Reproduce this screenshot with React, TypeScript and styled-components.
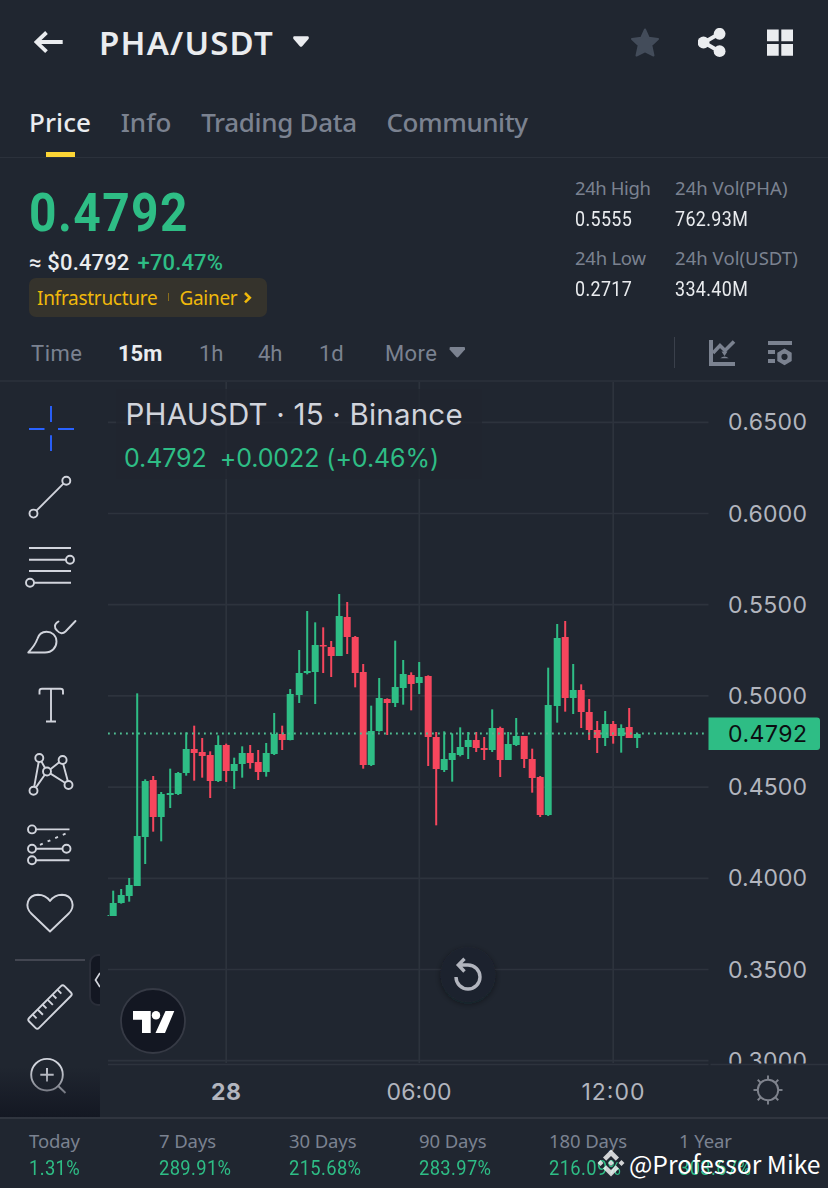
import React from "react";
import styled, { createGlobalStyle } from "styled-components";

const c = {
  bg: "#202630",
  line: "#2b313b",
  text: "#eaecef",
  muted: "#7b8290",
  green: "#2ebd85",
  red: "#f6465d",
  yellow: "#f0b90b",
  tool: "#d1d4dc",
  axis: "#b2b5be",
};

const PLEX = `"Noto Sans", "Open Sans", sans-serif`;
const DIN = `Roboto, "Liberation Sans", sans-serif`;
const UI = `Inter, Roboto, sans-serif`;

const GlobalStyle = createGlobalStyle`
  * { box-sizing: border-box; }
  body { margin: 0; background: ${c.bg}; }
  svg { display: block; flex: none; }
`;

const Page = styled.div`
  width: 828px;
  height: 1188px;
  display: flex;
  flex-direction: column;
  background: ${c.bg};
  color: ${c.text};
  font-family: ${PLEX};
  overflow: hidden;
  position: relative;
  white-space: nowrap;
`;

const Header = styled.header`
  height: 87px;
  display: flex;
  align-items: center;
  padding: 0 34px 2px;
`;

const Pair = styled.h1`
  margin: 0 18px 0 36px;
  width: 175px;
  font-size: 33px;
  font-weight: 600;
  letter-spacing: 1.2px;
  line-height: 40px;
`;

const HeaderActions = styled.div`
  display: flex;
  align-items: center;
  gap: 38px;
  margin-left: auto;
`;

const Tabs = styled.nav`
  height: 71px;
  display: flex;
  padding: 0 29px;
  border-bottom: 1px solid ${c.line};
`;

const Tab = styled.div<{ $active?: boolean; $w: number; $ls: number }>`
  width: ${(p) => p.$w}px;
  margin-right: 30px;
  display: flex;
  flex-direction: column;
  align-items: center;
  justify-content: space-between;
  padding-top: 17px;
  font-size: 26px;
  font-weight: 500;
  line-height: 36px;
  letter-spacing: ${(p) => p.$ls}px;
  color: ${(p) => (p.$active ? c.text : c.muted)};
  &::after {
    content: "";
    width: 29px;
    height: 5px;
    background: ${(p) => (p.$active ? "#fcd535" : "transparent")};
  }
`;

const Summary = styled.section`
  height: 167px;
  display: flex;
  justify-content: space-between;
  padding: 0 28px 0 29px;
`;

const PriceColumn = styled.div`
  padding-top: 20px;
`;

const LastPrice = styled.div`
  width: 180px;
  height: 68px;
  font: 700 54.5px/68px ${DIN};
  letter-spacing: 1.6px;
  color: ${c.green};
  transform: scaleX(0.88);
  transform-origin: 0 50%;
`;

const SubPrice = styled.div`
  height: 32px;
  display: flex;
  gap: 8px;
  font: 500 22px/34px ${DIN};
  letter-spacing: 0.15px;
`;

const Change = styled.span`
  color: ${c.green};
`;

const TagPill = styled.div`
  width: 238px;
  height: 39px;
  display: flex;
  align-items: center;
  padding: 0 8px;
  border-radius: 7px;
  background: #35332c;
  color: ${c.yellow};
  font-size: 19px;
  letter-spacing: -0.28px;
`;

const TagDivider = styled.i`
  width: 1px;
  height: 8px;
  margin: 0 10px 2px 11px;
  background: #8a6e1c;
`;

const StatGrid = styled.div`
  display: grid;
  grid-template-columns: 100px 125px;
  grid-auto-rows: 69.5px;
  padding-top: 15px;
`;

const StatLabel = styled.div<{ $ls: number }>`
  font-size: 18.5px;
  line-height: 30px;
  letter-spacing: ${(p) => p.$ls}px;
  color: ${c.muted};
`;

const StatValue = styled.div`
  font: 400 20px/33px ${DIN};
  letter-spacing: 0.4px;
  transform: scaleX(0.895);
  transform-origin: 0 50%;
`;

const Intervals = styled.div`
  height: 57px;
  display: flex;
  align-items: center;
  padding: 0 35px 0 31px;
  border-bottom: 2px solid #282e38;
`;

const Interval = styled.span<{ $w: number; $active?: boolean; $ls?: number }>`
  width: ${(p) => p.$w}px;
  padding-top: 2px;
  font: ${(p) => (p.$active ? 700 : 400)} 22px/30px ${DIN};
  letter-spacing: ${(p) => p.$ls ?? 0}px;
  color: ${(p) => (p.$active ? c.text : c.muted)};
`;

const IntervalTools = styled.div`
  margin-left: auto;
  display: flex;
  align-items: center;
  gap: 32px;
  height: 31px;
  padding-left: 33px;
  border-left: 1px solid #3a404b;
`;

const ChartArea = styled.section`
  height: 737px;
  display: flex;
  border-bottom: 2px solid #30353f;
`;

const Toolbar = styled.aside`
  width: 100px;
  height: 735px;
  padding-top: 12px;
  position: relative;
  overflow: hidden;
`;

const ToolCell = styled.div`
  height: 69.2px;
  display: flex;
  align-items: center;
`;

const ToolDivider = styled.hr`
  width: 70px;
  height: 2px;
  margin: 11px 15px 12px;
  border: 0;
  background: #434651;
`;

const ToolbarFade = styled.div`
  position: absolute;
  left: 0;
  right: 0;
  bottom: 0;
  height: 50px;
  background: linear-gradient(rgba(19, 23, 34, 0), rgba(19, 23, 34, 0.95));
`;

const CollapseHandle = styled.div`
  position: absolute;
  left: 89px;
  top: 572px;
  width: 24px;
  height: 52px;
  padding: 16px 0 0 3px;
  border: 2px solid #2a2e39;
  border-radius: 9px;
  background: #131722;
`;

const Plot = styled.div`
  width: 728px;
  height: 735px;
  display: flex;
  position: relative;
`;

const Legend = styled.div`
  position: absolute;
  left: 16px;
  top: 7px;
  width: 366px;
  height: 90px;
  padding-left: 8px;
  background: rgba(32, 38, 48, 0.8);
  font-family: ${UI};
`;

const LegendTitle = styled.div`
  padding-left: 1.5px;
  font-size: 29.5px;
  line-height: 51px;
  letter-spacing: 0.2px;
  color: ${c.tool};
`;

const LegendValues = styled.div`
  display: flex;
  gap: 13px;
  padding-top: 1px;
  font-size: 25px;
  line-height: 34px;
  letter-spacing: -0.08px;
  color: ${c.green};
`;

const Returns = styled.footer`
  height: 69px;
  display: grid;
  grid-template-columns: repeat(6, 130px);
  padding: 7px 0 0 29px;
`;

const ReturnLabel = styled.div`
  font: 400 18.5px/30px ${PLEX};
  letter-spacing: -0.1px;
  color: ${c.muted};
`;

const ReturnValue = styled.div`
  font: 400 19.5px/25px ${DIN};
  letter-spacing: 0.4px;
  color: ${c.green};
  transform: scaleX(0.94);
  transform-origin: 0 50%;
`;

const Watermark = styled.div`
  position: absolute;
  left: 597px;
  top: 1145px;
  display: flex;
  align-items: center;
  gap: 4px;
  font: 400 24.7px/36px "Noto Sans CJK SC", sans-serif;
  color: #fff;
`;

const toolIcons: Record<string, React.ReactNode> = {
  cross: <path stroke="#2962ff" d="M51-23V-7M51 6.3V22M29 0H44.5M58 0H74" />,
  trend: (
    <>
      <circle cx="66.3" cy="-17.3" r="4" />
      <circle cx="33.5" cy="15.6" r="4" />
      <path d="M63.4-14.4 36.4 12.7" />
    </>
  ),
  fib: (
    <>
      <path d="M29-19H71M29-7.3H66M29 4H71M34 15.7H71" />
      <circle cx="70" cy="-7.3" r="4" />
      <circle cx="30" cy="15.7" r="4" />
    </>
  ),
  brush: (
    <path
      strokeLinecap="round"
      strokeLinejoin="round"
      d="M28.300 16.500H45C52 16.500 56.500 11.500 56.500 5.500C56.500-.5 52-4.300 46.500-4.300C41.500-4.300 38.500-1 37.300 3C36 7 31.500 13 28.300 16.500ZM58.500-14.500C54-12 54-8.500 57-5.500C60-2 63-2 65.500-4.500L75.500-15"
    />
  ),
  text: <path d="M39.500-10.500V-14Q39.500-16.300 42-16.300H60.500Q63-16.300 63-14V-10.500M51-16.300V16.500M46 16.500H56" />,
  pattern: (
    <>
      <circle cx="39.300" cy="-17" r="4" />
      <circle cx="62.600" cy="-15" r="4" />
      <circle cx="47" cy="-3.500" r="4" />
      <circle cx="33.500" cy="15.700" r="4" />
      <circle cx="68.500" cy="10" r="4" />
      <path d="M38.700-13 34.200 11.700M41.400-13.600 45-7M44.800-.2 36 12.400M50.400-5.800 59.200-12.700M50.500-1.400 65 7.700M63.200-11 67.800 6" />
    </>
  ),
  position: (
    <>
      <circle cx="32" cy="-14.600" r="4" />
      <circle cx="32" cy="4.700" r="4" />
      <circle cx="66.500" cy="4.700" r="4" />
      <circle cx="32" cy="16.300" r="4" />
      <path d="M36-14.600H69.500M36 4.700H62.500M36 16.300H69.500" />
      <path strokeDasharray="3 5.300" d="M40 .8 67-11" />
    </>
  ),
  heart: (
    <path
      strokeLinejoin="round"
      d="M50 18.500 31.500 .8C24-6.500 27.500-18 38-18.300C44-18.300 47.500-15.500 50-12C52.500-15.500 56-18.300 62-18.300C72.500-18 76-6.500 68.500 .8Z"
    />
  ),
  ruler: (
    <g transform="translate(50 0) rotate(-45)">
      <rect x="-25" y="-7" width="50" height="14" rx="2.500" />
      <path d="M-17.500-7V-1.500M-10.500-7V.5M-3.500-7V-1.500M3.500-7V.5M10.500-7V-1.500M17.500-7V-1.500" />
    </g>
  ),
  zoom: (
    <>
      <circle cx="47" cy="-1.300" r="15.800" />
      <path d="M40.300-1.300H53.700M47-8V5.400M58.500 10.200 65.500 17" />
    </>
  ),
};

function Tool({ name }: { name: string }) {
  return (
    <ToolCell>
      <svg width="100" height="60" viewBox="0 -30 100 60" fill="none" stroke={c.tool} strokeWidth="1.900">
        {toolIcons[name]}
      </svg>
    </ToolCell>
  );
}

// [high, body top, body bottom, low, rising], in thirds of a pixel below each segment's base
type Candle = [number, number, number, number, 0 | 1];
const segments: { base: number; candles: Candle[] }[] = [
  {
    base: 279,
    candles: [
      [692, 729, 767, 767, 1], [687, 705, 729, 731, 1], [654, 675, 709, 725, 1], [100, 528, 677, 677, 1],
      [358, 363, 530, 612, 1], [348, 360, 471, 515, 0], [396, 403, 471, 544, 1], [326, 400, 406, 444, 1],
      [336, 338, 403, 405, 1], [217, 267, 339, 347, 1], [197, 267, 279, 362, 0], [234, 276, 288, 353, 0],
      [274, 286, 363, 414, 0], [226, 255, 363, 366, 1], [251, 255, 333, 366, 0], [293, 311, 332, 387, 1],
      [259, 278, 311, 353, 1], [255, 278, 309, 326, 0], [270, 306, 335, 360, 0], [249, 279, 335, 350, 1],
      [159, 221, 282, 285, 1], [197, 221, 240, 270, 0], [87, 102, 241, 241, 1],
    ],
  },
  {
    base: 199,
    candles: [
      [210, 279, 345, 369, 1], [93, 273, 280, 283, 1], [127, 194, 276, 372, 1], [142, 195, 199, 279, 0],
      [183, 200, 227, 291, 0], [42, 109, 227, 228, 1], [66, 111, 172, 222, 0], [168, 171, 279, 322, 0],
      [252, 276, 554, 566, 0], [377, 454, 554, 558, 1], [294, 354, 453, 455, 1], [355, 357, 369, 465, 0],
      [182, 321, 369, 381, 1], [240, 282, 323, 374, 1], [277, 285, 312, 391, 0], [246, 291, 309, 342, 1],
      [286, 289, 471, 558, 0], [456, 470, 568, 736, 0], [454, 537, 570, 576, 1],
    ],
  },
  {
    base: 219,
    candles: [
      [400, 460, 480, 545, 1], [382, 441, 465, 469, 1], [396, 420, 441, 477, 1], [396, 420, 444, 456, 0],
      [411, 443, 449, 480, 0], [328, 383, 450, 456, 1], [380, 383, 479, 531, 0], [396, 432, 479, 480, 1],
      [354, 408, 435, 438, 1], [408, 408, 476, 504, 0], [446, 476, 534, 578, 0], [528, 531, 645, 651, 0],
      [203, 316, 645, 648, 1], [72, 114, 318, 368, 1], [63, 111, 294, 335, 0], [192, 271, 294, 342, 1],
      [253, 270, 336, 384, 0], [297, 335, 390, 420, 0], [363, 390, 414, 459, 0], [333, 373, 414, 438, 1],
      [363, 373, 408, 431, 0], [373, 383, 408, 458, 1], [324, 381, 413, 413, 0], [399, 402, 414, 444, 1],
    ],
  },
];
const candles = segments.flatMap((s) =>
  s.candles.map(([h, t, b, l, up]) => ({ h: s.base + h / 3, t: s.base + t / 3, b: s.base + b / 3, l: s.base + l / 3, up })),
);

const prices = ["0.6500", "0.6000", "0.5500", "0.5000", "0.4500", "0.4000", "0.3500", "0.3000"];

function Chart() {
  return (
    <svg width="728" height="735" viewBox="0 1 728 735" fontFamily={UI} fontSize="23">
      <defs>
        <clipPath id="priceAxis">
          <rect x="600" width="128" height="682.500" />
        </clipPath>
        <filter id="soft" x="-50%" y="-50%" width="200%" height="200%">
          <feDropShadow dx="0" dy="2" stdDeviation="3" floodColor="#10141c" floodOpacity=".45" />
        </filter>
      </defs>
      <g stroke="#2d333d" strokeWidth="1.700">
        {prices.map((p, i) => (
          <path key={p} d={`M8 ${41.300 + i * 91.200}H608.500`} />
        ))}
        {[126.200, 319.300, 513.200].map((x) => (
          <path key={x} d={`M${x} 0V682`} />
        ))}
        <path d="M8 683.500H608.500M610.500 683.500H728" />
      </g>
      <g fill={c.axis} clipPath="url(#priceAxis)">
        {prices.map((p, i) => (
          <text key={p} x="628" y={49.300 + i * 91.200} textLength="79">
            {p}
          </text>
        ))}
      </g>
      <path d="M7.500 534.500h1.500" stroke={c.green} strokeWidth="1" />
      {candles.map((k, i) => {
        const x = Math.round(13.100 + i * 8.0625);
        const top = Math.round(k.t);
        return (
          <g key={i} fill={k.up ? c.green : c.red}>
            <rect x={x - 0.800} y={k.h} width="2" height={k.l - k.h} />
            <rect x={x - 3.300} y={top} width="7" height={Math.max(1.500, Math.round(k.b) - top)} />
          </g>
        );
      })}
      <path d="M8 352.500H605" stroke="#4fbd92" strokeWidth="1.800" strokeDasharray="1.800 4.200" />
      <path d="M608.500 336.500H717Q720 336.500 720 339.500V366Q720 369 717 369H608.500Z" fill={c.green} />
      <text x="628" y="361" fill="#0b0e11" textLength="79">
        0.4792
      </text>
      <g fill={c.axis}>
        <text x="111" y="719" fontWeight="700" textLength="30">
          28
        </text>
        <text x="286.500" y="719" textLength="65">
          06:00
        </text>
        <text x="481.500" y="719" textLength="63">
          12:00
        </text>
      </g>
      <circle cx="53" cy="640" r="32" fill="#131722" stroke="#363a45" strokeWidth="1.800" />
      <g fill="#fff">
        <path d="M33 630H50.700V652H42V638.700H33ZM65.500 630H74.300L65 652H55.500Z" />
        <circle cx="56" cy="634.300" r="4.200" />
      </g>
      <circle cx="368" cy="593.500" r="27.500" fill="#1f242f" filter="url(#soft)" />
      <path
        d="M356 596A12 12 0 1 0 368 584H359.500M364.500 577.800 358.300 584 364.500 590.500"
        fill="none"
        stroke={c.axis}
        strokeWidth="3.400"
      />
      <g fill="none" stroke="#7f838d" strokeWidth="1.900">
        <circle cx="668" cy="709" r="10.200" />
        {[0, 45, 90, 135, 180, 225, 270, 315].map((a) => (
          <path key={a} transform={`rotate(${a} 668 709)`} d="M668 698.500V694.500" />
        ))}
      </g>
    </svg>
  );
}

const stats: [string, string, number][] = [
  ["24h High", "0.5555", -0.4],
  ["24h Vol(PHA)", "762.93M", 0.05],
  ["24h Low", "0.2717", -0.25],
  ["24h Vol(USDT)", "334.40M", 0.05],
];

const returns = [
  ["Today", "1.31%"],
  ["7 Days", "289.91%"],
  ["30 Days", "215.68%"],
  ["90 Days", "283.97%"],
  ["180 Days", "216.09%"],
  ["1 Year", "303.67%"],
];

export default function App() {
  return (
    <Page>
      <GlobalStyle />
      <Header>
        <svg width="29" height="24" viewBox="0 0 29 24" fill="none" stroke={c.text} strokeWidth="3.800">
          <path d="M12.500 1.500 2.500 11 12.500 20.700M3 11H28.700" />
        </svg>
        <Pair>PHA/USDT</Pair>
        <svg width="17" height="16" viewBox="-0.7 0.8 17 16" fill={c.text}>
          <path d="M1.500 2H15Q16 2 16 3V4.500L9.500 12Q8.300 13.200 7.100 12L.6 4.500V3Q.6 2 1.500 2Z" />
        </svg>
        <HeaderActions>
          <svg width="30" height="30" viewBox="0 0 30 30" fill="#434c5a" stroke="#434c5a" strokeWidth="2" strokeLinejoin="round">
            <path d="M15 1.500 18.800 9.800 28 11 21.300 17.300 23.500 27.500 15 23.300 6.500 27.500 8.700 17.300 2 11 11.200 9.800Z" />
          </svg>
          <svg width="30" height="30" viewBox="1 0 30 30" fill={c.text} stroke={c.text}>
            <path d="M7 14.500 22.500 5.500M7 14.500 22.500 23.500" strokeWidth="3.800" />
            <g stroke="none">
              <circle cx="6.500" cy="14.500" r="5.900" />
              <circle cx="22.600" cy="5.800" r="5.900" />
              <circle cx="22.600" cy="23.200" r="5.900" />
            </g>
          </svg>
          <svg width="28" height="28" viewBox="0 0 28 28" fill={c.text}>
            <path d="M1 .5H12.700V12.200H1ZM15.300 .5H27V12.200H15.300ZM1 15H12.700V26.700H1ZM15.300 15H27V26.700H15.300Z" />
          </svg>
        </HeaderActions>
      </Header>
      <Tabs>
        <Tab $active $w={62} $ls={0.1}>Price</Tab>
        <Tab $w={50} $ls={0}>Info</Tab>
        <Tab $w={156} $ls={-0.33}>Trading Data</Tab>
        <Tab $w={140} $ls={-0.45}>Community</Tab>
      </Tabs>
      <Summary>
        <PriceColumn>
          <LastPrice>0.4792</LastPrice>
          <SubPrice>
            <span>≈ $0.4792</span>
            <Change>+70.47%</Change>
          </SubPrice>
          <TagPill>
            Infrastructure
            <TagDivider />
            Gainer
            <svg width="10" height="14" viewBox="0 0 10 14" fill="none" stroke={c.yellow} strokeWidth="2.600" style={{ marginLeft: 6 }}>
              <path d="M2 2 6.800 6.700 2 11.400" />
            </svg>
          </TagPill>
        </PriceColumn>
        <StatGrid>
          {stats.map(([k, v, ls]) => (
            <div key={k}>
              <StatLabel $ls={ls}>{k}</StatLabel>
              <StatValue>{v}</StatValue>
            </div>
          ))}
        </StatGrid>
      </Summary>
      <Intervals>
        <Interval $w={87} $ls={0.500}>Time</Interval>
        <Interval $w={81} $active>15m</Interval>
        <Interval $w={59}>1h</Interval>
        <Interval $w={61}>4h</Interval>
        <Interval $w={66}>1d</Interval>
        <Interval $w={64} $ls={0.400}>More</Interval>
        <svg width="17" height="14" viewBox="0 0 17 14" fill={c.muted}>
          <path d="M1.500 1H15Q16 1 16 2V3.500L9.500 10.800Q8.300 12 7.100 10.800L.6 3.500V2Q.6 1 1.500 1Z" />
        </svg>
        <IntervalTools>
          <svg width="28" height="28" viewBox="0 0 28 28" fill="none" stroke={c.muted} strokeWidth="4">
            <path d="M3 1V25H27" />
            <path d="M5 14 12 6.500 17 11.500 26 2.500" strokeWidth="3.600" />
            <path d="M12.300 19.300Q16.500 15.800 20.700 19.300ZM13.500 12.500 16.500 17 19.500 12.500Z" fill={c.muted} stroke="none" />
          </svg>
          <svg width="25" height="26" viewBox="0 0 25 26" fill={c.muted}>
            <path d="M0 1H24V5H0ZM0 10H7V14H0ZM0 19H7V23H0Z" />
            <path fillRule="evenodd" d="M16.500 8.500 23.700 12.700V21L16.500 25.200 9.300 21V12.700ZM16.500 13.700A3.100 3.100 0 1 0 16.500 19.900A3.100 3.100 0 1 0 16.500 13.700Z" />
          </svg>
        </IntervalTools>
      </Intervals>
      <ChartArea>
        <Toolbar>
          {["cross", "trend", "fib", "brush", "text", "pattern", "position", "heart"].map((n) => (
            <Tool key={n} name={n} />
          ))}
          <ToolDivider />
          <Tool name="ruler" />
          <Tool name="zoom" />
          <ToolbarFade />
          <CollapseHandle>
            <svg width="7" height="16" viewBox="0 0 7 16" fill="none" stroke={c.tool} strokeWidth="1.700">
              <path d="M6 1 1.500 8 6 15" />
            </svg>
          </CollapseHandle>
        </Toolbar>
        <Plot>
          <Chart />
          <Legend>
            <LegendTitle>PHAUSDT · 15 · Binance</LegendTitle>
            <LegendValues>
              <span>0.4792</span>
              <span>+0.0022 (+0.46%)</span>
            </LegendValues>
          </Legend>
        </Plot>
      </ChartArea>
      <Returns>
        {returns.map(([k, v]) => (
          <div key={k}>
            <ReturnLabel>{k}</ReturnLabel>
            <ReturnValue>{v}</ReturnValue>
          </div>
        ))}
      </Returns>
      <Watermark>
        <svg width="28" height="28" viewBox="0 0 28 28" fill="#fff" fillOpacity=".8">
          <path d="M14 .5 22 8.500 18.800 11.700 14 6.900 9.200 11.700 6 8.500ZM14 27.500 22 19.500 18.800 16.300 14 21.100 9.200 16.300 6 19.500ZM.5 14 3.500 11 6.500 14 3.500 17ZM21.500 14 24.500 11 27.500 14 24.500 17ZM11 14 14 11 17 14 14 17Z" />
        </svg>
        @Professor Mike
      </Watermark>
    </Page>
  );
}
